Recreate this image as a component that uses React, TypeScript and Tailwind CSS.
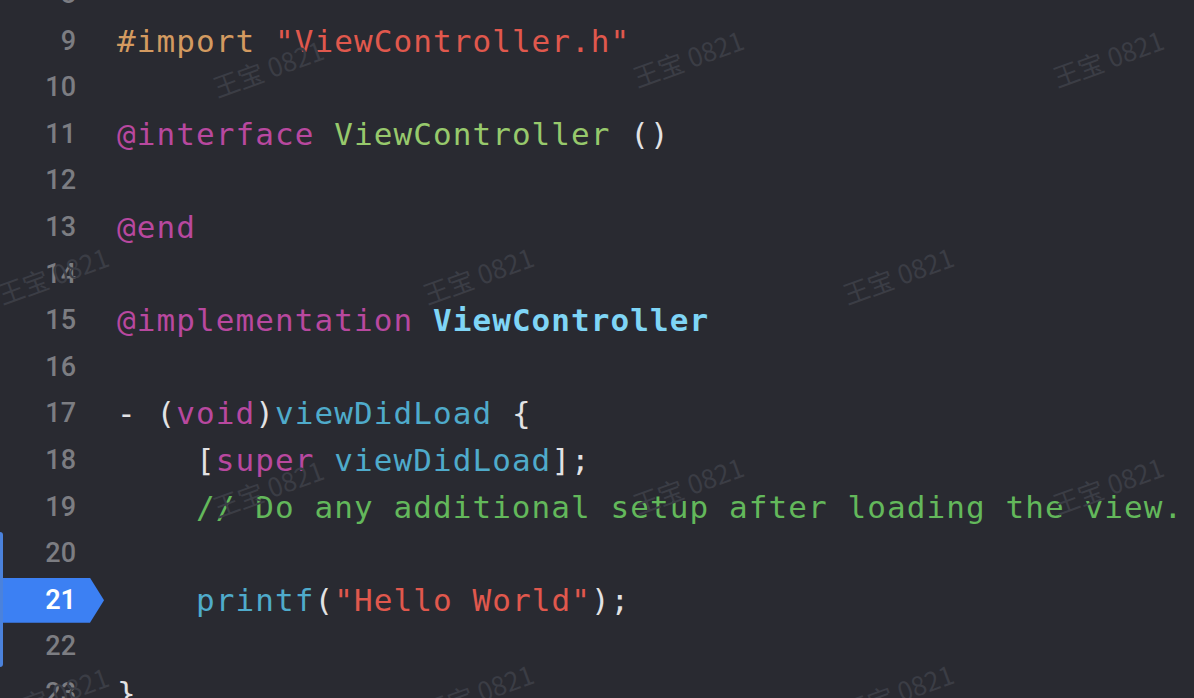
import React from 'react'

// token colours, Xcode dark theme as seen in the shot
const C = {
  plain: 'text-[#e2e2e4]',
  pre: 'text-[#d39a60]',
  str: 'text-[#e0584d]',
  kw: 'text-[#b8489f]',
  cls: 'text-[#97c96c]',
  decl: 'text-[#7fd5f6] font-bold',
  fn: 'text-[#4fabcb]',
  cmt: 'text-[#63b85b]',
}

type Tok = [string, string]

const lines: { n: number; toks: Tok[] }[] = [
  { n: 8, toks: [] },
  { n: 9, toks: [['#import ', C.pre], ['"ViewController.h"', C.str]] },
  { n: 10, toks: [] },
  { n: 11, toks: [['@interface', C.kw], [' ', C.plain], ['ViewController', C.cls], [' ()', C.plain]] },
  { n: 12, toks: [] },
  { n: 13, toks: [['@end', C.kw]] },
  { n: 14, toks: [] },
  { n: 15, toks: [['@implementation', C.kw], [' ', C.plain], ['ViewController', C.decl]] },
  { n: 16, toks: [] },
  { n: 17, toks: [['- (', C.plain], ['void', C.kw], [')', C.plain], ['viewDidLoad', C.fn], [' {', C.plain]] },
  { n: 18, toks: [['    [', C.plain], ['super', C.kw], [' ', C.plain], ['viewDidLoad', C.fn], ['];', C.plain]] },
  { n: 19, toks: [['    // Do any additional setup after loading the view.', C.cmt]] },
  { n: 20, toks: [] },
  { n: 21, toks: [['    ', C.plain], ['printf', C.fn], ['(', C.plain], ['"Hello World"', C.str], [');', C.plain]] },
  { n: 22, toks: [] },
  { n: 23, toks: [['}', C.plain]] },
]

// watermark grid: rows alternate between two column offsets
const marks = [
  [210, 48], [630, 38], [1050, 38],
  [-5, 255], [420, 255], [840, 255],
  [630, 465], [1050, 465], [210, 468],
  [-5, 675], [420, 672], [840, 672],
]

export default function App() {
  return (
    <div className="relative w-[1194px] h-[698px] overflow-hidden bg-[#292a31]">
      <div className="flex flex-col mt-[-29px]">
        {lines.map((l) => (
          <div key={l.n} className="flex items-center h-[46.6px]">
            <div className="relative w-[117px] h-full flex items-center justify-end pr-[41px] shrink-0">
              {l.n === 21 && (
                <div className="absolute left-0 top-[1px] h-[45px] w-[104px] bg-[#3c80f3] [clip-path:polygon(0_0,90px_0,104px_50%,90px_100%,0_100%)]" />
              )}
              <span
                className={
                  'relative text-[27px] font-[Roboto,sans-serif] ' +
                  (l.n === 21 ? 'text-white font-semibold' : 'text-[#7c7d82] font-medium')
                }
              >
                {l.n}
              </span>
            </div>
            <div className="whitespace-pre text-[31px] tracking-[1.08px] font-['DejaVu_Sans_Mono',monospace]">
              {l.toks.map((t, i) => (
                <span key={i} className={t[1]}>
                  {t[0]}
                </span>
              ))}
            </div>
          </div>
        ))}
      </div>

      {/* change bar in the gutter, lines 20-22 */}
      <div className="absolute left-0 top-[532px] w-[3px] h-[135px] rounded-r bg-[#4b82dc]" />

      {marks.map(([x, y], i) => (
        <div
          key={i}
          className="absolute pointer-events-none text-[26px] text-[#3b3d45] -rotate-[20deg] whitespace-nowrap font-['Noto_Sans_CJK_SC',sans-serif]"
          style={{ left: x, top: y }}
        >
          王宝 0821
        </div>
      ))}
    </div>
  )
}
